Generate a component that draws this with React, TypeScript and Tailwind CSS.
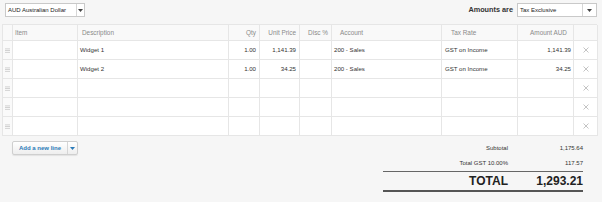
import React from "react";

const COLS = "grid grid-cols-[10px_65px_151px_31px_40px_32px_110px_76px_56px_24px]";

type Row = { desc: string; qty: string; price: string; account: string; tax: string; amount: string };

const rows: Row[] = [
  { desc: "Widget 1", qty: "1.00", price: "1,141.39", account: "200 - Sales", tax: "GST on Income", amount: "1,141.39" },
  { desc: "Widget 2", qty: "1.00", price: "34.25", account: "200 - Sales", tax: "GST on Income", amount: "34.25" },
  { desc: "", qty: "", price: "", account: "", tax: "", amount: "" },
  { desc: "", qty: "", price: "", account: "", tax: "", amount: "" },
  { desc: "", qty: "", price: "", account: "", tax: "", amount: "" },
];

function Caret({ color = "#444" }: { color?: string }) {
  return (
    <svg width="5" height="3" viewBox="0 0 5 3">
      <path d="M0 0 L5 0 L2.5 3 Z" fill={color} />
    </svg>
  );
}

function Handle() {
  return (
    <svg width="5" height="5" viewBox="0 0 5 5">
      <rect x="0" y="0.5" width="5" height="0.8" fill="#c8c8c8" />
      <rect x="0" y="2.2" width="5" height="0.8" fill="#c8c8c8" />
      <rect x="0" y="3.9" width="5" height="0.8" fill="#c8c8c8" />
    </svg>
  );
}

function Cross() {
  return (
    <svg width="6" height="6" viewBox="0 0 6 6">
      <path d="M0.5 0.5 L5.5 5.5 M5.5 0.5 L0.5 5.5" stroke="#b5b5b5" strokeWidth="0.8" />
    </svg>
  );
}

const cell = "border-r border-b border-[#e6e6e6] flex items-center";

export default function App() {
  return (
    <div className="w-[602px] h-[202px] bg-[#f6f6f6] overflow-hidden font-[family-name:Liberation_Sans,Arial,sans-serif] text-[#333]">
      {/* top bar */}
      <div className="flex items-center justify-between pt-[3px] pl-[5px] pr-[5px] h-[17px]">
        <div className="flex h-[14px] w-[80px] border border-[#c9c9c9] bg-white">
          <div className="flex-1 flex items-center pl-[2px] text-[6px] text-[#222]">AUD Australian Dollar</div>
          <div className="w-[8px] border-l border-[#d6d6d6] flex items-center justify-center">
            <Caret />
          </div>
        </div>
        <div className="flex items-center gap-[4px]">
          <span className="text-[7.3px] font-bold text-[#333]">Amounts are</span>
          <div className="flex h-[14px] w-[80px] border border-[#c9c9c9] bg-white">
            <div className="flex-1 flex items-center pl-[2px] text-[6px] text-[#222]">Tax Exclusive</div>
            <div className="w-[14px] border-l border-[#d6d6d6] flex items-center justify-center">
              <Caret />
            </div>
          </div>
        </div>
      </div>

      {/* table */}
      <div className="mt-[7px] ml-[2px] w-[595px] border-l border-t border-[#e6e6e6]">
        <div className={`${COLS} h-[16px] bg-[#f9f9f9] text-[6.4px] text-[#8a8a8a]`}>
          <div className={cell}></div>
          <div className={`${cell} pl-[2px]`}>Item</div>
          <div className={`${cell} pl-[4px]`}>Description</div>
          <div className={`${cell} justify-end pr-[3px]`}>Qty</div>
          <div className={`${cell} justify-end pr-[3px]`}>Unit Price</div>
          <div className={`${cell} justify-end pr-[3px]`}>Disc %</div>
          <div className={`${cell} pl-[8px]`}>Account</div>
          <div className={`${cell} pl-[9px]`}>Tax Rate</div>
          <div className={`${cell} justify-end pr-[6px]`}>Amount AUD</div>
          <div className={cell}></div>
        </div>
        {rows.map((r, i) => (
          <div key={i} className={`${COLS} h-[19px] bg-white text-[6.1px] text-[#333]`}>
            <div className={`${cell} justify-center bg-[#fafafa]`}>
              <Handle />
            </div>
            <div className={cell}></div>
            <div className={`${cell} pl-[2px]`}>{r.desc}</div>
            <div className={`${cell} justify-end pr-[3px]`}>{r.qty}</div>
            <div className={`${cell} justify-end pr-[3px]`}>{r.price}</div>
            <div className={cell}></div>
            <div className={`${cell} pl-[2px]`}>{r.account}</div>
            <div className={`${cell} pl-[3px]`}>{r.tax}</div>
            <div className={`${cell} justify-end pr-[2px]`}>{r.amount}</div>
            <div className={`${cell} justify-center`}>
              <Cross />
            </div>
          </div>
        ))}
      </div>

      {/* bottom */}
      <div className="flex justify-between items-start">
        <div className="ml-[12px] mt-[5px] flex h-[14px] w-[66px] rounded-[2px] border border-[#cfcfcf] bg-gradient-to-b from-white to-[#eeeeee] shadow-[0_1px_1px_rgba(0,0,0,0.08)]">
          <div className="flex-1 flex items-center justify-center text-[6px] font-bold text-[#2b7bb9]">Add a new line</div>
          <div className="w-[10px] border-l border-[#d6d6d6] flex items-center justify-center">
            <Caret color="#2b7bb9" />
          </div>
        </div>
        <div className="mr-[19px] mt-[7px] w-[200px]">
          <div className="grid grid-cols-[125px_75px] h-[10px] items-center text-[6px] text-[#333]">
            <div className="text-right">Subtotal</div>
            <div className="text-right">1,175.64</div>
          </div>
          <div className="grid grid-cols-[125px_75px] h-[10px] mt-[5px] items-center text-[6px] text-[#333]">
            <div className="text-right">Total GST 10.00%</div>
            <div className="text-right">117.57</div>
          </div>
          <div className="mt-[3px] border-t border-[#666]"></div>
          <div className="grid grid-cols-[125px_75px] h-[20px] items-center text-[12px] font-bold text-[#222] border-b-2 border-[#555]">
            <div className="text-right leading-none">TOTAL</div>
            <div className="text-right leading-none">1,293.21</div>
          </div>
        </div>
      </div>
    </div>
  );
}
